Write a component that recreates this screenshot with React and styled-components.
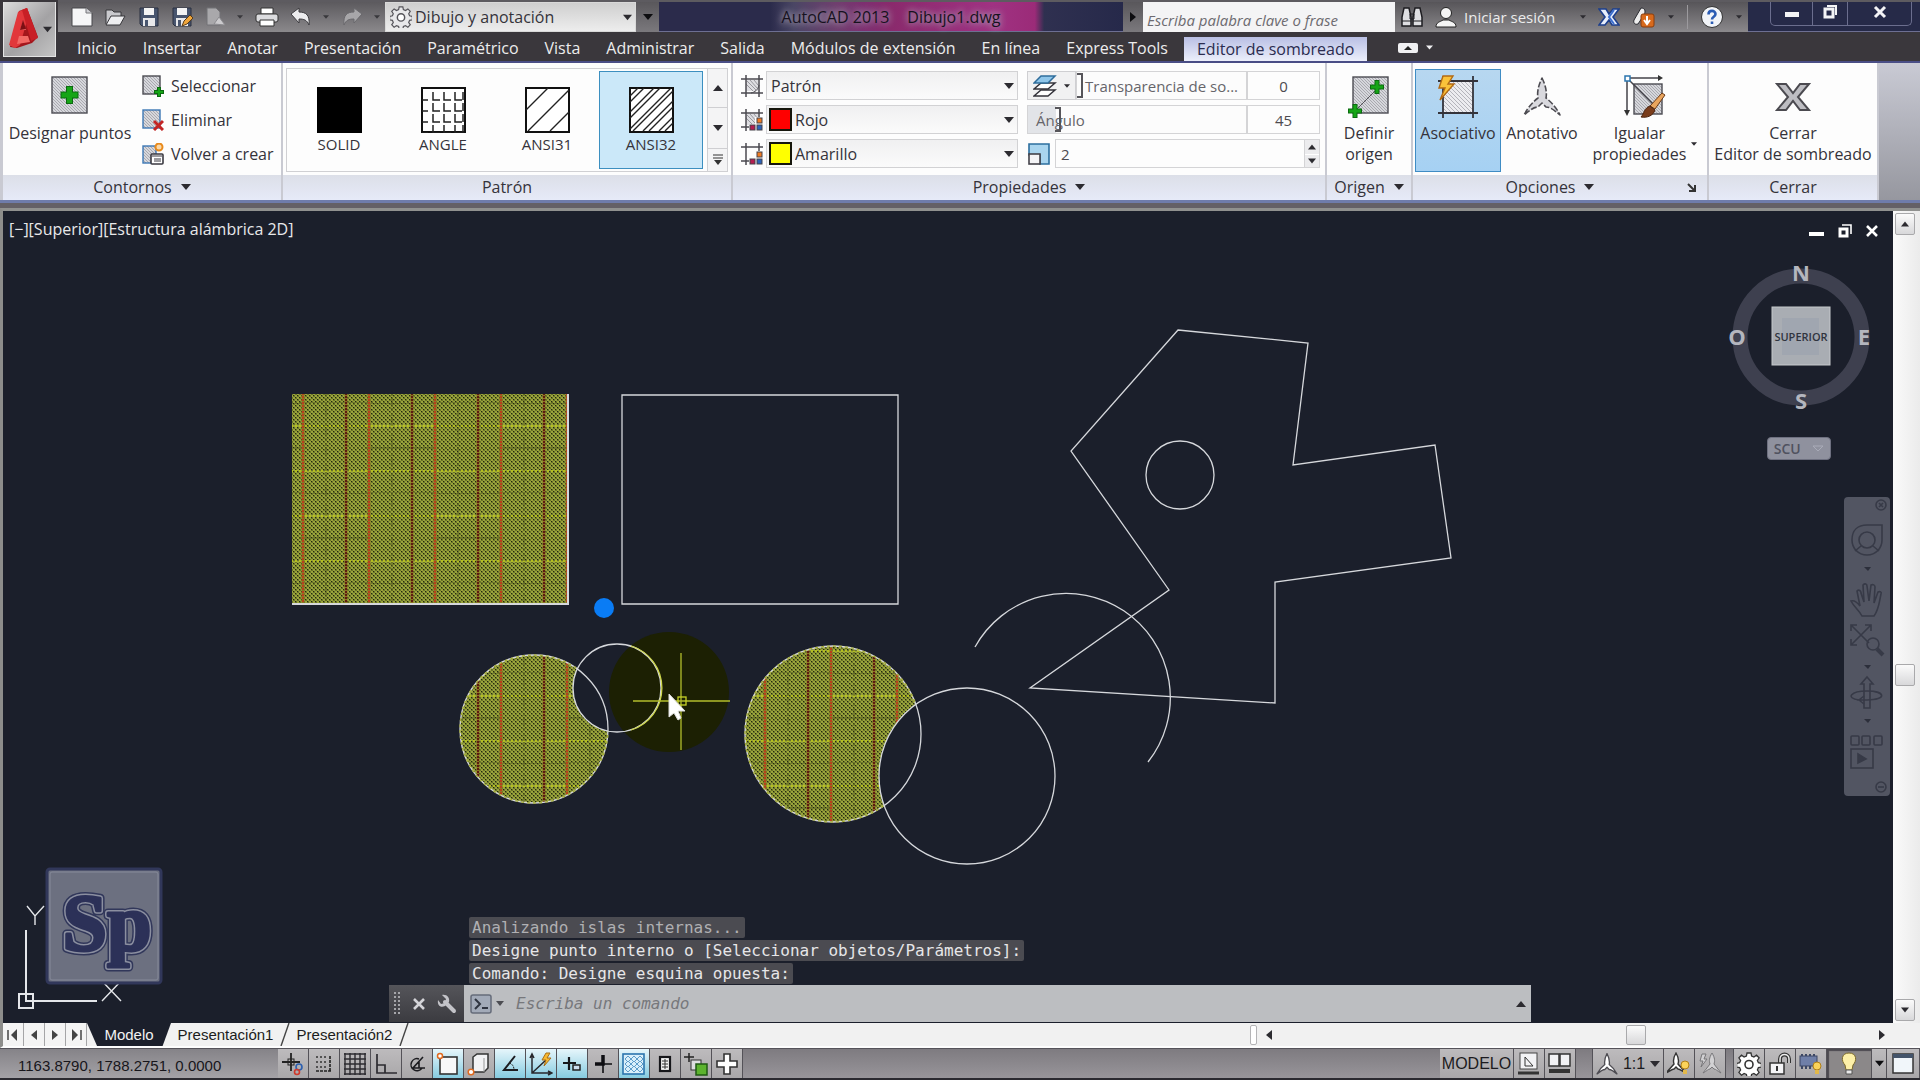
import React from 'react'
import styled, { createGlobalStyle, css } from 'styled-components'

const GlobalStyle = createGlobalStyle`
  * { box-sizing: border-box; }
  html, body { margin: 0; background: #1b1f2b; }
  body, button, input, select {
    font-family: "Open Sans", "Noto Sans", sans-serif;
    font-size: 16px;
  }
  button { border: none; background: none; padding: 0; margin: 0; color: inherit; cursor: pointer; }
  svg { display: block; flex: none; }
`

const ui = '#35333a'

/* ---------- shell ---------- */

const Shell = styled.div`
  min-height: 100vh;
  display: flex;
  flex-direction: column;
  background: #646066;
  color: ${ui};
  overflow: hidden;
`

const Header = styled.header`
  display: flex;
  background: #3a373c;
  border-bottom: 2px solid #4a4e86;
`

const AppButton = styled.button`
  width: 53px;
  height: 55px;
  margin: 2px 2px 0 3px;
  display: flex;
  align-items: center;
  justify-content: center;
  gap: 3px;
  background: linear-gradient(135deg, #dcdcdc, #a3a2a4 55%, #c4c4c4);
  border: 1px solid #e4e4e4;
  border-top: none;
`

const HeaderMain = styled.div`
  flex: 1;
  min-width: 0;
`

const TitleBar = styled.div`
  height: 34px;
  display: flex;
  align-items: stretch;
  border-top: 2px solid #5d5b60;
  border-bottom: 2px solid #3a373c;
  background: #2b2b4b;
`

const QuickBar = styled.div`
  width: 327px;
  display: flex;
  align-items: center;
  justify-content: space-between;
  padding: 0 5px 0 13px;
  background: linear-gradient(#5c5a5e, #8b898c);
`

const ToolButton = styled.button`
  display: flex;
  align-items: center;
  justify-content: center;
`

const SelectBox = styled.label`
  display: flex;
  align-items: center;
  gap: 3px;
  width: ${p => p.$w || 'auto'};
  flex: ${p => p.$w ? 'none' : '1'};
  height: ${p => p.$h || '29px'};
  padding: 0 3px 0 ${p => p.$left || '4px'};
  border: 1px solid ${p => p.$title ? '#d9d9d9' : '#d2d2d4'};
  background: ${p => p.$title ? 'linear-gradient(#cfcfcf, #ededed)' : 'linear-gradient(#f0f0f1, #fbfbfb)'};
  select {
    flex: 1;
    min-width: 0;
    appearance: none;
    border: none;
    outline: none;
    background: transparent;
    color: ${ui};
    padding: 0;
  }
`

const DarkButton = styled.button`
  width: ${p => p.$w};
  display: flex;
  align-items: center;
  justify-content: center;
  background: linear-gradient(#59575b, #7b797d);
`

const DocTitle = styled.h1`
  flex: 1;
  margin: 0;
  display: flex;
  align-items: center;
  justify-content: center;
  gap: 18px;
  font-size: 16px;
  font-weight: 400;
  color: #17121e;
  text-shadow: 0 0 8px #a7a0b4, 0 0 6px #a7a0b4;
  background: linear-gradient(90deg, #2b2b4b 24%, #4a4664 29%, #6f3f6e 38%, #7d2f70 44%, #8a2a6c 50%, #a03282 72%, #9b2b78 81%, #2f3050 83%, #26294a);
  border-bottom: 1px solid #6d6f92;
`

const SearchInput = styled.input`
  width: 252px;
  border: none;
  background: #f4f4f5;
  padding: 5px 4px 0;
  font-size: 15px;
  &::placeholder { color: #6d6b70; font-style: italic; opacity: 1; }
`

const InfoCenter = styled.div`
  width: 353px;
  display: flex;
  align-items: center;
  padding: 0 6px;
  color: #ececec;
  font-size: 15px;
  background: linear-gradient(#575559, #8b898c);
`

const SignIn = styled.button`
  display: flex;
  align-items: center;
  gap: 7px;
  margin-left: 12px;
  font-size: 15px;
`

const Push = styled.span`
  flex: 1;
`

const Divider = styled.span`
  width: 1px;
  height: 24px;
  background: #9c9a9e;
`

const WindowArea = styled.div`
  width: 172px;
  display: flex;
  justify-content: flex-end;
  padding-right: 8px;
  background: #262a48;
  border-bottom: 1px solid #6d6f92;
`

const WindowButtons = styled.div`
  width: 142px;
  height: 24px;
  display: grid;
  grid-template-columns: 41px 35px 1fr;
  border: 1px solid #6b6e8e;
  border-top: none;
  border-radius: 0 0 5px 5px;
  button { display: flex; align-items: center; justify-content: center; padding-bottom: 3px; }
  button + button { border-left: 1px solid #6b6e8e; }
`

const TabBar = styled.nav`
  height: 27px;
  display: flex;
  align-items: stretch;
  padding-left: 6px;
`

const Tab = styled.button`
  padding: 0 13px;
  color: ${p => p.$active ? '#2b2c50' : '#ededed'};
  background: ${p => p.$active ? 'linear-gradient(#b9bfe4, #eceffb)' : 'none'};
  margin: ${p => p.$active ? '3px 0 0 3px' : '1px 0 0'};
`

const CollapseButton = styled.button`
  display: flex;
  align-items: center;
  gap: 8px;
  margin-left: 31px;
`

/* ---------- ribbon ---------- */

const Ribbon = styled.section`
  height: 140px;
  display: flex;
  gap: 2px;
  padding-left: 3px;
  background: #c9cad2;
  border-bottom: 3px solid #6f7cab;
`

const PanelBox = styled.div`
  width: ${p => p.$w};
  flex: none;
  display: flex;
  flex-direction: column;
  background: #fdfdfd;
`

const PanelBody = styled.div`
  flex: 1;
  min-height: 0;
  display: flex;
  gap: ${p => p.$gap || '0'};
  padding: ${p => p.$pad || '0'};
`

const PanelTitle = styled.footer`
  height: 25px;
  display: flex;
  background: linear-gradient(#dcdfe8, #e6eaf8);
`

const TitleButton = styled.button`
  flex: 1;
  display: flex;
  align-items: center;
  justify-content: center;
  gap: 9px;
  padding-bottom: 2px;
`

const LauncherButton = styled.button`
  width: 20px;
  display: flex;
  align-items: center;
`

const RibbonFill = styled.div`
  flex: 1;
  background: linear-gradient(#c9cad4, #96979f);
`

const BigButton = styled.button`
  width: ${p => p.$w};
  height: 103px;
  display: flex;
  flex-direction: column;
  align-items: center;
  padding-top: 4px;
  gap: 3px;
  line-height: 21px;
  border: 1px solid ${p => p.$on ? '#3f8cc4' : 'transparent'};
  background: ${p => p.$on ? 'linear-gradient(#b7d7f0, #a6d1f3)' : 'none'};
  white-space: nowrap;
`

const WithArrow = styled.span`
  display: flex;
  align-items: center;
  gap: 5px;
`

const SmallStack = styled.div`
  display: flex;
  flex-direction: column;
  gap: 5px;
  padding-left: 5px;
`

const SmallButton = styled.button`
  height: 29px;
  display: flex;
  align-items: center;
  gap: 7px;
  white-space: nowrap;
`

const Gallery = styled.div`
  flex: 1;
  display: flex;
  border: 1px solid #d0d0d3;
`

const Swatch = styled.button`
  flex: 1;
  margin: 2px 0;
  display: flex;
  flex-direction: column;
  align-items: center;
  padding-top: 15px;
  gap: 1px;
  font-size: 15px;
  line-height: 21px;
  border: 1px solid ${p => p.$on ? '#3c8fc0' : 'transparent'};
  background: ${p => p.$on ? '#cbe8f9' : 'none'};
`

const GalleryScroll = styled.div`
  width: 20px;
  margin-left: 4px;
  display: grid;
  grid-template-rows: 38px 41px 1fr;
  border-left: 1px solid #d0d0d3;
  button { display: flex; align-items: center; justify-content: center; background: #f4f4f5; }
  button + button { border-top: 1px solid #cfcfd2; }
`

const PropColumn = styled.div`
  width: ${p => p.$w};
  display: flex;
  flex-direction: column;
  gap: 5px;
`

const PropRow = styled.div`
  height: 29px;
  display: flex;
  align-items: center;
  gap: ${p => p.$gap || '0'};
`

const ColorChip = styled.span`
  width: 23px;
  height: 23px;
  border: 2px solid #16160c;
  background: ${p => p.$c};
`

const LayerButton = styled.button`
  width: 49px;
  height: 29px;
  display: flex;
  align-items: center;
  justify-content: center;
  gap: 7px;
  background: #f1f1f2;
  border: 1px solid #cfcfd2;
`

const SliderBox = styled.label`
  flex: 1;
  height: 29px;
  display: grid;
  align-items: center;
  border: 1px solid #d4d4d6;
  color: #66656a;
  font-size: 15px;
  background: linear-gradient(90deg, #e2e4e8 ${p => p.$fill}, #fcfcfc ${p => p.$fill});
  > * { grid-area: 1 / 1; min-width: 0; }
  > span { padding-left: 8px; white-space: nowrap; }
  input {
    width: 100%;
    margin: 0;
    appearance: none;
    background: transparent;
  }
  input::-webkit-slider-thumb {
    appearance: none;
    width: 6px;
    height: 25px;
    border: 2px solid #56555a;
    border-left: none;
  }
`

const NumberBox = styled.input`
  width: ${p => p.$w};
  flex: ${p => p.$w ? 'none' : '1'};
  min-width: 0;
  height: 29px;
  padding: 0 5px;
  border: 1px solid #d4d4d6;
  border-right: ${p => p.$w ? '1px solid #d4d4d6' : 'none'};
  background: #fdfdfd;
  text-align: ${p => p.$w ? 'center' : 'left'};
  color: #4d4b50;
  font-size: 15px;
`

const ScaleRow = styled.div`
  flex: 1;
  display: flex;
`

const Spinner = styled.div`
  width: 16px;
  height: 29px;
  display: grid;
  grid-template-rows: 1fr 1fr;
  border: 1px solid #d4d4d6;
  button { display: flex; align-items: center; justify-content: center; background: #ececee; }
  button + button { border-top: 1px solid #fff; }
`

/* ---------- drawing area ---------- */

const Workspace = styled.main`
  flex: 1;
  min-height: 600px;
  display: flex;
  margin-top: 5px;
  border-top: 3px solid #90918f;
  border-left: 3px solid #8d8d8b;
`

const Viewport = styled.div`
  position: relative;
  flex: 1;
  min-width: 0;
  background: #1b1f2b;
  > svg.sheet { position: absolute; inset: 0; width: 100%; height: 100%; }
`

const ViewLabel = styled.button`
  position: absolute;
  left: 6px;
  top: 7px;
  color: #e8e8ea;
`

const DocControls = styled.div`
  position: absolute;
  top: 13px;
  right: 14px;
  display: flex;
  align-items: center;
  gap: 13px;
`

const ViewCube = styled.div`
  position: absolute;
  top: 44px;
  right: 16px;
  width: 152px;
  display: flex;
  flex-direction: column;
  align-items: center;
  gap: 22px;
`

const CoordButton = styled.button`
  width: 64px;
  height: 23px;
  display: flex;
  align-items: center;
  justify-content: space-around;
  margin-left: -4px;
  border-radius: 4px;
  border: 1px solid #6e7080;
  background: #8f919e;
  color: #50525f;
  font-size: 14px;
  font-weight: 600;
`

const NavBar = styled.div`
  position: absolute;
  right: 3px;
  top: 286px;
  width: 46px;
  height: 299px;
  border-radius: 4px;
  background: #525562;
`

const Watermark = styled.div`
  position: absolute;
  left: 42px;
  bottom: 38px;
  width: 118px;
  height: 118px;
`

const CommandLine = styled.div`
  position: absolute;
  left: 386px;
  right: 362px;
  bottom: 1px;
  font-family: "DejaVu Sans Mono", monospace;
`

const History = styled.ol`
  list-style: none;
  margin: 0 0 1px 80px;
  padding: 0;
  display: flex;
  flex-direction: column;
  align-items: flex-start;
  gap: 2px;
`

const HistoryLine = styled.li`
  height: 21px;
  padding: 0 3px;
  line-height: 21px;
  border-radius: 2px;
  background: #4b4b51;
  color: ${p => p.$old ? '#b0b0b3' : '#e6e6e8'};
  white-space: pre;
`

const Prompt = styled.div`
  height: 37px;
  display: flex;
  background: #bcbec1;
  align-items: center;
  padding-right: 5px;
  > input {
    flex: 1;
    border: none;
    outline: none;
    background: transparent;
    font-family: inherit;
    padding: 0 0 0 10px;
  }
  > input::placeholder { color: #77787c; font-style: italic; opacity: 1; }
`

const PromptHandle = styled.div`
  width: 75px;
  height: 37px;
  margin-right: 6px;
  display: flex;
  align-items: center;
  justify-content: space-between;
  padding: 0 7px 0 4px;
  background: linear-gradient(#55555a, #3b3b40);
`

const VScroll = styled.div`
  width: 27px;
  padding: 2px 5px 2px 2px;
  display: flex;
  flex-direction: column;
  align-items: center;
  background: linear-gradient(90deg, #fafafa, #ebebeb);
`

const ScrollButton = styled.button`
  width: 20px;
  height: ${p => p.$h || '22px'};
  display: flex;
  align-items: center;
  justify-content: center;
  border: 1px solid #a9a9ab;
  border-radius: 2px;
  background: linear-gradient(#fbfbfb, #d8d8da);
`

const ScrollGap = styled.span`
  flex: ${p => p.$n};
`

const LayoutBar = styled.div`
  height: 25px;
  display: flex;
  align-items: stretch;
  background: #f1f1f1;
  border-left: 3px solid #8d8d8b;
  border-bottom: 2px solid #fdfdfd;
`

const NavButton = styled.button`
  width: 21px;
  display: flex;
  align-items: center;
  justify-content: center;
  background: #f4f4f4;
  border-right: 1px solid #a5a5a7;
`

const LayoutTab = styled.button`
  width: ${p => p.$w};
  font-family: "Liberation Sans", Arial, sans-serif;
  font-size: 15px;
  color: ${p => p.$on ? '#f2f2f2' : '#1c1c20'};
  ${p => p.$on && css`
    background: #1b1f2b;
    clip-path: polygon(0 0, 100% 0, 90% 100%, 12% 100%);
  `}
`

const HScroll = styled.div`
  width: 670px;
  margin-left: auto;
  display: flex;
  align-items: center;
  padding: 0 33px 0 0;
`

const SplitGrip = styled.span`
  width: 7px;
  height: 20px;
  margin-right: 7px;
  border: 1px solid #b4b4b6;
  border-radius: 2px;
  background: #fff;
`

/* ---------- status bar ---------- */

const StatusBar = styled.footer`
  height: 32px;
  display: flex;
  border-top: 1px solid #55535a;
  border-bottom: 2px solid #2b2a30;
  background: linear-gradient(#7e7b80, #98959a);
  font-family: "Liberation Sans", Arial, sans-serif;
`

const Coords = styled.output`
  width: 278px;
  display: flex;
  align-items: center;
  padding: 3px 0 0 18px;
  font-size: 15px;
  color: #17161b;
  background: linear-gradient(#858388, #a4a2a6);
`

const StatusButton = styled.button`
  width: ${p => p.$w || '31px'};
  display: flex;
  align-items: center;
  justify-content: center;
  gap: 5px;
  border-right: 1px solid #545258;
  font-family: inherit;
  font-size: 16px;
  color: #1c1b20;
  background: ${p => p.$dark ? '#8b8889' : p.$on ? 'linear-gradient(#e6f6fb, #86cbe0)' : 'linear-gradient(#bdbbbd, #a9a7a9)'};
  box-shadow: ${p => p.$dark ? 'inset 2px 2px 1px #4c4a50' : 'none'};
`

const StatusGap = styled.span`
  width: ${p => p.$w};
  border-right: 1px solid #545258;
`

/* ---------- glyphs ---------- */

const Arrow = ({ dir = 'down', size = 10, color = '#2c2b30' }) => {
  const d = {
    down: 'M0 2h10L5 8z',
    up: 'M0 8h10L5 2z',
    left: 'M8 0v10L2 5z',
    right: 'M2 0v10l6-5z',
  }[dir]
  return <svg width={size} height={size} viewBox="0 0 10 10" aria-hidden="true"><path d={d} fill={color} /></svg>
}

const S = ({ w = 24, h = 24, box, children }) => (
  <svg width={w} height={h} viewBox={box || `0 0 ${w} ${h}`} fill="none" aria-hidden="true">{children}</svg>
)

const hatchLines = (w, h, step) => {
  let d = ''
  for (let i = -h; i < w; i += step) {
    const x1 = Math.max(i, 0), y1 = x1 - i
    const x2 = Math.min(i + h, w), y2 = x2 - i
    d += `M${x1} ${y1}L${x2} ${y2}`
  }
  return d
}

const Hatch = ({ x = 0, y = 0, w, h, step = 3, stroke = '#a9a9af', fill = '#d6d7dc', edge = '#4b4b52' }) => (
  <g transform={`translate(${x} ${y})`}>
    <rect width={w} height={h} fill={fill} />
    <path d={hatchLines(w, h, step)} stroke={stroke} strokeWidth="1" />
    <rect width={w} height={h} stroke={edge} strokeWidth="1.4" />
  </g>
)

const Plus = ({ x, y, s = 5, t = 4, c = '#16a516' }) => (
  <g>
    <path d={`M${x - s} ${y}h${2 * s}M${x} ${y - s}v${2 * s}`} stroke="#0b6a10" strokeWidth={t + 2} />
    <path d={`M${x - s + 1} ${y}h${2 * s - 2}M${x} ${y - s + 1}v${2 * s - 2}`} stroke={c} strokeWidth={t} />
  </g>
)

const Gear = ({ size = 22, stroke = '#55545a', fill = '#e8e8ea' }) => (
  <S w={size} h={size} box="0 0 24 24">
    <path d="M10 1h4l.6 3 2.3 1 2.6-1.8 2.6 2.7-1.7 2.6 1 2.2 3 .7v3.6l-3 .6-1 2.4 1.7 2.5-2.6 2.7-2.6-1.8-2.3 1-.6 3h-4l-.6-3-2.3-1-2.6 1.8-2.6-2.7 1.7-2.5-1-2.4-3-.6v-3.6l3-.7 1-2.2L1.900 5.900 4.500 3.200 7.100 5l2.300-1z" fill={fill} stroke={stroke} strokeWidth="1.3" />
    <circle cx="12" cy="12.500" r="4" stroke={stroke} strokeWidth="1.600" fill="#fff" />
  </S>
)

const Tripod = ({ size = 40, stroke = '#4d4c52', fill = '#dcdce0', dash }) => (
  <S w={size} h={size} box="0 0 40 40">
    <path d="M20 1c4 8 5 15 4 20 4 3 10 9 14 17-6-5-10-8-14-8l-4-4-4 4c-4 0-8 3-14 8 4-8 10-14 14-17-1-5 0-12 4-20z" fill={fill} stroke={stroke} strokeWidth={size > 30 ? 1.6 : 2.4} strokeDasharray={dash} strokeLinejoin="round" />
  </S>
)

const Disk = ({ pen }) => (
  <S w={22} h={22}>
    <path d="M2 2h18v18H4l-2-2z" fill="#48556e" stroke="#2a3140" />
    <rect x="6" y="2" width="10" height="7" fill="#f4f4f4" />
    <rect x="5" y="12" width="12" height="8" fill="#e8e8ea" />
    <rect x="7" y="14" width="3" height="6" fill="#48556e" />
    {pen && <path d="M11 20l2-5 6-6 3 3-6 6z" fill="#f0a63c" stroke="#5a3c17" />}
  </S>
)

const HatchFrame = ({ curved, chips, inner = true }) => (
  <S w={22} h={22}>
    {inner && <path d="M5 5h12v11H5z" fill="#dedee2" />}
    {inner && <path d="M6 6l9 9M9 5l7 8M5 9l7 7M13 5l4 5" stroke="#98989e" />}
    <path d="M5 0v22M0 4h22M18 0v22M0 18h22" stroke="#4b4a50" strokeWidth="1.500" />
    {curved && <path d="M18 10c-1 5-4 7-8 8" stroke="#4b4a50" />}
    {chips && (
      <g strokeWidth="1" stroke="#44424a">
        <path d="M14 8h8v14H8v-7h6z" fill="#fdfdfd" stroke="none" />
        <rect x="16" y="9" width="5" height="5" fill="#f07a20" />
        <rect x="9" y="16" width="5" height="5" fill="#b51e50" />
        <rect x="16" y="16" width="5" height="5" fill="#2c63b8" />
      </g>
    )}
  </S>
)

const LogoA = () => (
  <S w={32} h={46}>
    <path d="M2 41L11 5l8-3 11 29-6 6-15 5z" fill="#a3161c" />
    <path d="M1 39L10 6l9-4 2 6-9 31-5 3z" fill="#e2373b" />
    <path d="M14 4l5-2 11 30-7 3z" fill="#c81f26" />
    <path d="M12 24l3-9 3 9zM11 30h9l2 6-13 2z" fill="#f26a66" />
    <path d="M15 14l3 9-6 1z" fill="#7c0f14" />
  </S>
)

const PATTERNS = {
  SOLID: <S w={45} h={46}><rect width="45" height="46" fill="#000" /></S>,
  ANGLE: (
    <S w={45} h={46}>
      <rect x="1" y="1" width="43" height="44" fill="#fff" stroke="#111" strokeWidth="2" />
      <path
        d={[0, 1, 2, 3].map(r => `M1 ${13 + r * 11}h6` + [0, 1, 2].map(c => `M${12 + c * 11} ${5 + r * 11}v8h7`).join('') + `M42 ${5 + r * 11}v8`).join('')}
        stroke="#222" strokeWidth="1.500"
      />
    </S>
  ),
  ANSI31: (
    <S w={45} h={46}>
      <rect x="1" y="1" width="43" height="44" fill="#fff" stroke="#111" strokeWidth="2" />
      <path d="M1 23L23 1M3 44L44 3M25 44l19-19" stroke="#222" strokeWidth="1.400" />
    </S>
  ),
  ANSI32: (
    <S w={45} h={46}>
      <rect x="1" y="1" width="43" height="44" fill="#fff" stroke="#111" strokeWidth="2" />
      <path d="M1 9l8-8M1 15L15 1M1 25L25 1M1 31L31 1M1 42L42 1M4 44L44 4M14 44l30-30M20 44l24-24M30 44l14-14M36 44l8-8" stroke="#222" strokeWidth="1.400" />
    </S>
  ),
}

const statusTools = [
  ['Inferir restricciones', false, <S><path d="M10 1v18M1 10h18" stroke="#222" strokeWidth="1.800" /><rect x="7" y="7" width="6" height="6" stroke="#222" /><circle cx="18" cy="15" r="3" stroke="#2c5fb0" strokeWidth="1.600" /><circle cx="16" cy="20" r="2.500" stroke="#d0392b" strokeWidth="1.600" /></S>],
  ['Forzar cursor', false, <S><path d="M4 5h11M4 10h11M4 15h11" stroke="#333" strokeWidth="1.600" strokeDasharray="2 2" /><path d="M18 4v15M4 19h15" stroke="#222" strokeWidth="1.600" strokeDasharray="3 1" /></S>],
  ['Rejilla', false, <S><path d="M1 2h22M1 7h22M1 12h22M1 17h22M1 22h22M2 1v22M7 1v22M12 1v22M17 1v22M22 1v22" stroke="#2c2b30" strokeWidth="1.400" /></S>],
  ['Orto', false, <S><path d="M3 2v19h20M3 13h8v8" stroke="#2c2b30" strokeWidth="1.700" /></S>],
  ['Polar', false, <S><path d="M18 5L8 16h12M14 7a6 6 0 1 0 3 9M14 10v6" stroke="#1c1c20" strokeWidth="1.600" /></S>],
  ['Referencia a objetos', true, <S><rect x="4" y="5" width="17" height="17" fill="#f7f7f8" stroke="#333" strokeWidth="1.600" /><circle cx="4" cy="4" r="2.500" stroke="#e06a20" strokeWidth="1.500" fill="#fff" /></S>],
  ['Referencia a objetos 3D', false, <S><path d="M6 5l4-3h11v14l-4 4H6z" fill="#f2f2f4" stroke="#333" strokeWidth="1.500" /><path d="M17 6v14" stroke="#999" /><circle cx="4" cy="20" r="2.800" stroke="#e06a20" strokeWidth="1.500" fill="#fff" /></S>],
  ['Rastreo', true, <S><path d="M17 4L6 18h14" stroke="#1c1c20" strokeWidth="2" /><path d="M11 11c4 1 5 4 5 7" stroke="#222" strokeDasharray="2 1" /></S>],
  ['SCP dinámico', true, <S><path d="M3 3v18h19M3 21l14-13M1 6l2-4 2 4M19 19l4 2-4 2" stroke="#27272c" strokeWidth="1.500" /><path d="M17 1l-4 7h4l-2 6 7-8h-4l3-5z" fill="#f8b930" stroke="#a8701a" /></S>],
  ['Entrada dinámica', true, <S><path d="M9 5v13M3 11h13" stroke="#16161a" strokeWidth="2.200" /><rect x="13" y="13" width="7" height="5" fill="#cde" stroke="#222" strokeWidth="1.500" /></S>],
  ['Grosor de línea', false, <S><path d="M12 3v9H4" stroke="#0e0e12" strokeWidth="3.500" /><path d="M12 12v9M12 12h9" stroke="#0e0e12" strokeWidth="1.600" /></S>],
  ['Transparencia', true, <S><rect x="1" y="2" width="21" height="20" fill="#d9effa" stroke="#2b75ae" strokeWidth="1.600" /><path d="M3 7l3-3 3 3 3-3 3 3 3-3 3 3M3 12l3-3 3 3 3-3 3 3 3-3 3 3M3 17l3-3 3 3 3-3 3 3 3-3 3 3M3 7l3 3 3-3 3 3 3-3 3 3 3-3M3 12l3 3 3-3 3 3 3-3 3 3 3-3M3 17l3 3 3-3 3 3 3-3 3 3 3-3" stroke="#5c9cc9" /></S>],
  ['Propiedades rápidas', false, <S><rect x="7" y="5" width="10" height="14" fill="#f4f4f4" stroke="#16161a" strokeWidth="2.200" /><path d="M9 9h6M9 12h6M9 15h6M12 7v10" stroke="#333" /></S>],
  ['Ciclo de selección', false, <S><path d="M5 1v9M0 5h10" stroke="#222" strokeWidth="1.500" /><rect x="7" y="8" width="10" height="10" fill="#dedee0" stroke="#333" /><rect x="12" y="12" width="11" height="11" fill="#5cb32e" stroke="#1f5a13" strokeWidth="1.500" /></S>],
  ['Supervisor de anotación', false, <S><path d="M9 2h6v7h7v6h-7v7H9v-7H2V9h7z" fill="#fff" stroke="#333" strokeWidth="1.600" /></S>],
]

/* Geometry in drawing units, origin at the top left of the viewport */
const redStripes = [0, 43]

function Sheet() {
  return (
    <svg className="sheet" viewBox="3 211 1890 812" preserveAspectRatio="xMidYMid meet" fill="none" stroke="#d6d8dc" strokeWidth="1.300" role="img" aria-label="Dibujo1">
      <defs>
        <pattern id="weave" x="291" y="393" width="4" height="4" patternUnits="userSpaceOnUse">
          <rect width="4" height="4" fill="#9aa53a" stroke="none" />
          <path d="M0 0h2v2h-2zM2 2h2v2h-2z" fill="#69722a" stroke="none" />
          <path d="M0 0h1v1h-1zM2 2h1v1h-1z" fill="#23290f" stroke="none" />
        </pattern>
        <pattern id="stripes" x="301" y="393" width="66" height="45" patternUnits="userSpaceOnUse">
          <path d="M0 33h66" stroke="#b4bf1e" strokeWidth="2" strokeDasharray="2 2" />
          <path d="M0 10h66" stroke="#4c541c" strokeWidth="1" strokeDasharray="2 2" />
          <path d="M25 0v45" stroke="#525a1c" strokeWidth="1" strokeDasharray="3 2" />
          {redStripes.map(x => (
            <g key={x}>
              <path d={`M${x + 2} 0v45`} stroke="#8c7424" strokeWidth="3" />
              <path d={`M${x + 2} 0v45`} stroke={x ? '#5e1a10' : '#b8401c'} strokeWidth="2" strokeDasharray="2 1" />
            </g>
          ))}
        </pattern>
        <mask id="biteA"><rect x="400" y="600" width="300" height="300" fill="#fff" stroke="none" /><circle cx="617" cy="688" r="44" fill="#000" stroke="none" /></mask>
        <mask id="biteC"><rect x="700" y="600" width="400" height="300" fill="#fff" stroke="none" /><circle cx="967" cy="776" r="88" fill="#000" stroke="none" /></mask>
      </defs>

      <g stroke="none">
        {['weave', 'stripes'].map(id => (
          <g key={id} fill={`url(#${id})`}>
            <rect x="292" y="394" width="276" height="210" />
            <circle cx="534" cy="729" r="74" mask="url(#biteA)" />
            <circle cx="833" cy="734" r="88" mask="url(#biteC)" />
          </g>
        ))}
        <circle cx="669" cy="692" r="60" fill="#1c2003" />
        <circle cx="604" cy="608" r="10" fill="#0a7cf5" />
      </g>

      <path d="M292 604h276V394" strokeWidth="2" />
      <path d="M622 395h276v209h-276z" />
      <circle cx="534" cy="729" r="74" />
      <circle cx="534" cy="729" r="74" stroke="#a4ad33" strokeDasharray="3 3" mask="url(#biteA)" />
      <circle cx="833" cy="734" r="88" />
      <circle cx="833" cy="734" r="88" stroke="#a4ad33" strokeDasharray="3 3" mask="url(#biteC)" />
      <circle cx="617" cy="688" r="44" />
      <path d="M631 646a44 44 0 0 1 0 84" stroke="#cdd64a" />
      <circle cx="967" cy="776" r="88" />
      <path d="M1178 330l130 13-15 122 142-20 16 113-176 24v121l-245-15 139-98-98-139z" />
      <circle cx="1180" cy="475" r="34" />
      <path d="M975 647a104.200 104.200 0 1 1 173 115" />

      <path d="M633 701h97M681 653v97" stroke="#b3bd2c" />
      <rect x="678" y="697" width="8" height="8" stroke="#c8d327" />
      <path d="M669 694v23l5-4 4 7 3-2-3-7h7z" fill="#fff" stroke="#ddd" strokeWidth="1" />

      <g stroke="#e4e6ea" strokeWidth="2">
        <rect x="19" y="994" width="14" height="14" />
        <path d="M26 930v71h71" />
        <path d="M27 906l8 10 9-10M35 916v9M102 981l19 20M121 981l-19 20" strokeWidth="1.400" />
      </g>
    </svg>
  )
}

function Panel({ w, title, menu, launcher, pad, gap, children }) {
  return (
    <PanelBox $w={w}>
      <PanelBody $pad={pad} $gap={gap}>{children}</PanelBody>
      <PanelTitle>
        <TitleButton>{title}{menu && <Arrow size={10} />}</TitleButton>
        {launcher && <LauncherButton aria-label="Parámetros de sombreado"><S w={10} h={10}><path d="M1 1l6 6M8 2v6H2" stroke="#333" strokeWidth="2" /></S></LauncherButton>}
      </PanelTitle>
    </PanelBox>
  )
}

function Picker({ label, value, color, left }) {
  return (
    <SelectBox $left={left}>
      {color && <ColorChip $c={color} />}
      <select aria-label={label} defaultValue={value}><option>{value}</option></select>
      <Arrow />
    </SelectBox>
  )
}

const tabs = ['Inicio', 'Insertar', 'Anotar', 'Presentación', 'Paramétrico', 'Vista', 'Administrar', 'Salida', 'Módulos de extensión', 'En línea', 'Express Tools', 'Editor de sombreado']

function Top() {
  return (
    <Header>
      <AppButton aria-label="Menú de la aplicación"><LogoA /><Arrow size={9} /></AppButton>
      <HeaderMain>
        <TitleBar>
          <QuickBar>
            <ToolButton aria-label="Nuevo"><S w={22} h={22}><path d="M1 2h14l6 5v13H1z" fill="#f6f6f7" stroke="#47464a" /><path d="M15 2v5h6" fill="#cfcfd4" stroke="#77767a" /></S></ToolButton>
            <ToolButton aria-label="Abrir"><S w={22} h={22}><path d="M2 18V4h6l2 2h7v4" fill="#c9c9cd" stroke="#37363a" /><path d="M2 19l5-9h14l-5 9z" fill="#eeeef0" stroke="#37363a" /></S></ToolButton>
            <ToolButton aria-label="Guardar"><Disk /></ToolButton>
            <ToolButton aria-label="Guardar como"><Disk pen /></ToolButton>
            <ToolButton aria-label="Trazar"><S w={22} h={22}><path d="M3 2h9l4 4v13H3z" fill="#a9a8ab" stroke="#737276" /><path d="M10 18l5-7 6 8z" fill="#cccbce" stroke="#8c8b8f" /></S></ToolButton>
            <Arrow size={6} color="#39383c" />
            <ToolButton aria-label="Imprimir"><S w={24} h={22}><path d="M6 2h12v6H6z" fill="#fff" stroke="#333" /><rect x="1" y="8" width="22" height="8" rx="2" fill="#dcdcdf" stroke="#333" /><path d="M5 14h14v6H5z" fill="#fff" stroke="#333" /></S></ToolButton>
            <ToolButton aria-label="Deshacer"><S w={22} h={22}><path d="M1 8l8-6v4c7 0 11 3 10 13-2-5-5-6-10-6v4z" fill="#ececee" stroke="#3c3b3f" /></S></ToolButton>
            <Arrow size={6} color="#39383c" />
            <ToolButton aria-label="Rehacer"><S w={22} h={22}><path d="M21 8l-8-6v4C6 6 2 9 3 19c2-5 5-6 10-6v4z" fill="#a7a6a9" stroke="#69686c" /></S></ToolButton>
            <Arrow size={6} color="#39383c" />
          </QuickBar>
          <SelectBox $title $w="251px" $h="30px">
            <Gear size={22} />
            <select aria-label="Espacio de trabajo" defaultValue="Dibujo y anotación"><option>Dibujo y anotación</option></select>
            <Arrow size={9} />
          </SelectBox>
          <DarkButton $w="23px" aria-label="Personalizar barra"><Arrow color="#0d0d10" /></DarkButton>
          <DocTitle><span>AutoCAD 2013</span><span>Dibujo1.dwg</span></DocTitle>
          <DarkButton $w="20px" aria-label="Ocultar búsqueda"><Arrow dir="right" color="#0d0d10" /></DarkButton>
          <SearchInput aria-label="Buscar" placeholder="Escriba palabra clave o frase" />
          <InfoCenter>
            <ToolButton aria-label="Buscar"><S w={22} h={22}><path d="M3 2h5l2 9v9H1v-9zM14 2h5l2 9v9h-9v-9z" fill="#dedee1" stroke="#1d1c20" strokeWidth="1.500" /><path d="M9 8h4v5H9zM1 15h9M12 15h9" stroke="#1d1c20" /></S></ToolButton>
            <SignIn>
              <S w={22} h={22}><circle cx="11" cy="7" r="5.500" fill="#f4f4f4" stroke="#222" /><path d="M1 21c0-5 4-5 7-7h6c3 2 7 2 7 7z" fill="#f4f4f4" stroke="#222" /></S>
              Iniciar sesión
            </SignIn>
            <Push />
            <Push />
            <Arrow size={6} />
            <Push />
            <ToolButton aria-label="Exchange"><S w={22} h={20}><path d="M1 2h7l3 5 4-5h6l-6 8 6 8h-7l-3-5-4 5H1l6-8z" fill="#e8eefb" stroke="#1d3f8c" strokeWidth="1.600" /><path d="M16 3l-5 7 5 7" stroke="#3c6fd0" strokeWidth="2" /></S></ToolButton>
            <Push />
            <ToolButton aria-label="Autodesk 360"><S w={24} h={22}><path d="M9 2c4 0 5 3 3 7l-6 9c-3 1-5-1-4-4z" fill="#eee" stroke="#2a2a30" /><rect x="9" y="8" width="13" height="13" rx="2" fill="#d86a1c" stroke="#8a3d0c" /><path d="M15 10v7M12 14l3 4 3-4" stroke="#fff" strokeWidth="2" /></S></ToolButton>
            <Push />
            <Arrow size={6} />
            <Push />
            <Divider />
            <Push />
            <ToolButton aria-label="Ayuda"><S w={24} h={24}><circle cx="12" cy="12" r="10.500" fill="#f2f4f8" stroke="#333" /><path d="M8.500 9.500c0-5 7-4.500 7-.5 0 3-3.500 2.500-3.500 5.500M12 16.500v2.500" stroke="#2b5cb4" strokeWidth="2.600" /></S></ToolButton>
            <Push />
            <Arrow size={6} />
          </InfoCenter>
          <WindowArea>
            <WindowButtons>
              <button aria-label="Minimizar"><S w={16} h={14}><rect x="1" y="7" width="14" height="5" fill="#f4f4f6" /></S></button>
              <button aria-label="Restaurar"><S w={16} h={16}><path d="M5 2h9v9" stroke="#f4f4f6" strokeWidth="2" /><rect x="3" y="5" width="8" height="8" stroke="#f4f4f6" strokeWidth="3" /></S></button>
              <button aria-label="Cerrar"><S w={14} h={14}><path d="M2 2l10 10M12 2L2 12" stroke="#f4f4f6" strokeWidth="3" /></S></button>
            </WindowButtons>
          </WindowArea>
        </TitleBar>
        <TabBar>
          {tabs.map(t => <Tab key={t} $active={t === 'Editor de sombreado'}>{t}</Tab>)}
          <CollapseButton aria-label="Minimizar cinta">
            <S w={20} h={12}><rect x="0" y="1" width="20" height="10" rx="2" fill="#f0f0f2" /><path d="M6 8h8l-4-4z" fill="#222" /></S>
            <Arrow size={7} color="#f0f0f2" />
          </CollapseButton>
        </TabBar>
      </HeaderMain>
    </Header>
  )
}

function HatchRibbon() {
  return (
    <Ribbon>
      <Panel w="278px" title="Contornos" menu pad="8px 0 0">
        <BigButton $w="134px">
          <S w={40} h={44}><Hatch x={2} y={1} w={35} h={36} /><Plus x={19.500} y={19} s={9} t={5} /></S>
          <span>Designar puntos</span>
        </BigButton>
        <SmallStack>
          <SmallButton><S w={22} h={22}><Hatch x={1} y={1} w={17} h={18} /><Plus x={17} y={17} s={5} t={2} /></S>Seleccionar</SmallButton>
          <SmallButton><S w={22} h={22}><Hatch x={1} y={1} w={17} h={18} edge="#3c77b4" /><path d="M12 12l9 9M21 12l-9 9" stroke="#c22525" strokeWidth="3" /></S>Eliminar</SmallButton>
          <SmallButton><S w={22} h={22}><Hatch x={1} y={3} w={13} h={17} edge="#3c77b4" /><circle cx="17" cy="4" r="3.500" fill="#fbd9a8" stroke="#e88a1c" strokeWidth="2" /><rect x="9" y="11" width="12" height="10" rx="1" fill="#fff" stroke="#3a3940" strokeWidth="1.600" /><path d="M10 13h10M12 16h7M12 18h7" stroke="#3a3940" /></S>Volver a crear</SmallButton>
        </SmallStack>
      </Panel>

      <Panel w="448px" title="Patrón" pad="5px 3px 3px">
        <Gallery>
          {Object.keys(PATTERNS).map(p => (
            <Swatch key={p} $on={p === 'ANSI32'}>{PATTERNS[p]}{p}</Swatch>
          ))}
          <GalleryScroll>
            <button aria-label="Subir"><Arrow dir="up" /></button>
            <button aria-label="Bajar"><Arrow /></button>
            <button aria-label="Más patrones"><S w={10} h={12}><path d="M0 1h10M0 4h10" stroke="#333" /><path d="M1 6h8l-4 5z" fill="#333" /></S></button>
          </GalleryScroll>
        </Gallery>
      </Panel>

      <Panel w="592px" title="Propiedades" menu pad="8px 5px 0 8px" gap="9px">
        <PropColumn $w="277px">
          <PropRow $gap="3px"><HatchFrame curved /><Picker label="Tipo de sombreado" value="Patrón" /></PropRow>
          <PropRow $gap="3px"><HatchFrame chips /><Picker label="Color de sombreado" value="Rojo" color="#ff0000" left="2px" /></PropRow>
          <PropRow $gap="3px"><HatchFrame chips inner={false} /><Picker label="Color de fondo" value="Amarillo" color="#ffff00" left="2px" /></PropRow>
        </PropColumn>
        <PropColumn $w="293px">
          <PropRow>
            <LayerButton aria-label="Capa">
              <S w={24} h={24}><g stroke="#33323a" strokeWidth="1.500" fill="#fff"><path d="M1 22l7-6h14l-7 6z" /><path d="M1 15l7-6h14l-7 6z" /><path d="M1 9l7-7h14l-7 7z" fill="#8fc6ea" stroke="#2f6d9c" /></g></S>
              <Arrow size={6} />
            </LayerButton>
            <SliderBox $fill="0%"><span>Transparencia de so...</span><input type="range" min="0" max="90" defaultValue="0" /></SliderBox>
            <NumberBox $w="73px" aria-label="Valor de transparencia" defaultValue="0" />
          </PropRow>
          <PropRow>
            <SliderBox $fill="13%"><span>Ángulo</span><input type="range" min="0" max="360" defaultValue="45" /></SliderBox>
            <NumberBox $w="73px" aria-label="Valor de ángulo" defaultValue="45" />
          </PropRow>
          <PropRow $gap="4px">
            <S w={24} h={24}><path d="M2 2h20v20h-9v-9H2z" fill="#a9d5ef" stroke="#2c6f9f" strokeWidth="1.600" /><rect x="2" y="12" width="11" height="10" fill="#f4f4f6" stroke="#44434a" strokeWidth="1.600" /></S>
            <ScaleRow>
              <NumberBox aria-label="Escala de sombreado" defaultValue="2" />
              <Spinner>
                <button aria-label="Aumentar"><Arrow dir="up" size={8} /></button>
                <button aria-label="Disminuir"><Arrow size={8} /></button>
              </Spinner>
            </ScaleRow>
          </PropRow>
        </PropColumn>
      </Panel>

      <Panel w="84px" title="Origen" menu pad="6px 0 0">
        <BigButton $w="84px">
          <S w={46} h={46}><Hatch x={7} y={3} w={35} h={36} /><path d="M10 36L32 14" stroke="#55545a" /><Plus x={31} y={13} s={7} t={3} /><Plus x={9} y={37} s={7} t={3} /></S>
          <span>Definir<br />origen</span>
        </BigButton>
      </Panel>

      <Panel w="294px" title="Opciones" menu launcher pad="6px 0 0 2px">
        <BigButton $w="86px" $on>
          <S w={46} h={46}>
            <path d="M8 7h30v32H8z" fill="#ececf0" />
            <path d={hatchLines(30, 30, 4)} transform="translate(8 8)" stroke="#b4b4bb" />
            <path d="M8 2v42M38 2v42M3 7h40M3 39h40" stroke="#34333a" strokeWidth="1.800" />
            <path d="M8 2l-4 12h6l-5 12 14-16h-6l5-8z" fill="#fbc23a" stroke="#b26a14" strokeWidth="1.400" />
          </S>
          <span>Asociativo</span>
        </BigButton>
        <BigButton $w="82px">
          <S w={46} h={46}><g transform="translate(3 3)"><Tripod size={40} dash="6 2" fill="#d9d9de" /></g></S>
          <span>Anotativo</span>
        </BigButton>
        <BigButton $w="124px">
          <S w={46} h={46}>
            <Hatch x={12} y={10} w={28} h={30} />
            <path d="M5 4h32M5 4v34M5 4l26 26" stroke="#44434a" strokeWidth="1.500" />
            <path d="M36 1l5 3-5 3zM2 36l3 6 3-6z" fill="#333" />
            <rect x="3" y="2" width="5" height="5" fill="#fff" stroke="#2b75ae" strokeWidth="1.500" />
            <path d="M28 32l12-13 3 2-10 14z" fill="#e9a55e" stroke="#6b3a17" />
            <path d="M19 43c3-3 3-9 9-11l5 4c-2 6-8 8-14 7z" fill="#7a3d1c" stroke="#4a230e" />
          </S>
          <WithArrow><span>Igualar<br />propiedades</span><Arrow size={6} /></WithArrow>
        </BigButton>
      </Panel>

      <Panel w="168px" title="Cerrar" pad="6px 0 0">
        <BigButton $w="168px">
          <S w={46} h={46}><path d="M7 10h9l7 9 7-9h9L28 23l11 13h-9l-7-9-7 9H7l11-13z" fill="#bdbdc2" stroke="#4b4a50" strokeWidth="2" /></S>
          <span>Cerrar<br />Editor de sombreado</span>
        </BigButton>
      </Panel>
      <RibbonFill />
    </Ribbon>
  )
}

function DrawingArea() {
  return (
    <Workspace>
      <Viewport>
        <Sheet />
        <ViewLabel>[−][Superior][Estructura alámbrica 2D]</ViewLabel>
        <DocControls>
          <ToolButton aria-label="Minimizar dibujo"><S w={16} h={14}><rect y="8" width="15" height="4" fill="#fff" /></S></ToolButton>
          <ToolButton aria-label="Restaurar dibujo"><S w={14} h={14}><path d="M4 1h9v9" stroke="#fff" strokeWidth="1.600" /><rect x="2" y="5" width="7" height="7" stroke="#fff" strokeWidth="3" /></S></ToolButton>
          <ToolButton aria-label="Cerrar dibujo"><S w={14} h={14}><path d="M2 2l10 10M12 2L2 12" stroke="#fff" strokeWidth="2.600" /></S></ToolButton>
        </DocControls>
        <ViewCube>
          <svg width="152" height="160" viewBox="0 -6 152 160" fontFamily="Open Sans, sans-serif" textAnchor="middle" role="img" aria-label="ViewCube">
            <circle cx="76" cy="76" r="61" fill="none" stroke="#3e404f" strokeWidth="15" />
            <rect x="47" y="46" width="58" height="58" fill="#a9adb3" stroke="#c6c9cc" />
            <rect x="57" y="57" width="37" height="37" fill="#a0a6b0" />
            <text x="76" y="80" fontSize="11" fontWeight="600" fill="#30343e">SUPERIOR</text>
            <g fontSize="22" fontWeight="700" fill="#b4b6be">
              <text x="76" y="20">N</text>
              <text x="76" y="148">S</text>
              <text x="12" y="84">O</text>
              <text x="139" y="84">E</text>
            </g>
          </svg>
          <CoordButton>SCU<S w={12} h={8}><path d="M1 1h10L6 6z" stroke="#a9abb8" /></S></CoordButton>
        </ViewCube>
        <NavBar>
          <S w={46} h={299}>
            <g stroke="#373a47" strokeWidth="1.600">
              <circle cx="37" cy="8" r="5" /><path d="M35 6l4 4M39 6l-4 4" />
              <path d="M8 43c0-10 6-15 15-15h15v15c0 8-6 15-15 15S8 51 8 43z" /><circle cx="23" cy="43" r="8" /><path d="M17 49l-6 5M29 49l6 5" />
              <path d="M18 119c-3-6-8-9-11-15 3-1 6 1 9 5l-3-15c2-2 4 0 4 2l3 9-1-17c2-2 4-1 4 1l2 15 2-16c2-1 4 0 4 2l-1 16 4-11c2-1 4 0 3 2-2 9-2 15-7 22z" />
              <path d="M7 148l20-20M7 128l18 18M7 134v-6h6M21 128h6v6M7 142v6h6" /><circle cx="29" cy="147" r="6" /><path d="M33 152l6 6" strokeWidth="4" />
              <path d="M20 211v-24h-3l6-7 6 7h-3v24z" /><path d="M15 203c-14-2-8-9 8-9 19 0 20 9 0 9h-8l5-4M15 203l5 4" />
              <rect x="7" y="239" width="8" height="9" rx="1" /><rect x="18" y="239" width="8" height="9" rx="1" /><rect x="30" y="239" width="8" height="9" rx="1" />
              <rect x="7" y="252" width="22" height="19" /><path d="M14 257v9l8-4z" fill="#373a47" />
              <circle cx="37" cy="290" r="5" /><path d="M34 290h6" />
            </g>
            <path d="M20 70h7l-3 4zM20 168h7l-3 4zM20 222h7l-3 4z" fill="#2c2f3b" />
          </S>
        </NavBar>
        <Watermark>
          <svg width="118" height="118" viewBox="0 0 118 118" role="img" aria-label="Sp">
            <rect x="2" y="2" width="114" height="114" rx="3" fill="#6c7080" stroke="#31375a" strokeWidth="3" />
            <rect x="5" y="5" width="108" height="108" rx="2" fill="none" stroke="#868a9a" />
            <g fontFamily="Liberation Serif, serif" fontWeight="700" fontSize="80" textAnchor="middle" strokeLinejoin="round">
              <text x="62" y="83" fill="#31375a" stroke="#31375a" strokeWidth="9">Sp</text>
              <text x="62" y="83" fill="#31375a" stroke="#8b8fa0" strokeWidth="6">Sp</text>
              <text x="62" y="83" fill="#2c3158" stroke="#2c3158" strokeWidth="3">Sp</text>
            </g>
          </svg>
        </Watermark>
        <CommandLine>
          <History>
            <HistoryLine $old>Analizando islas internas...</HistoryLine>
            <HistoryLine>Designe punto interno o [Seleccionar objetos/Parámetros]:</HistoryLine>
            <HistoryLine>Comando: Designe esquina opuesta:</HistoryLine>
          </History>
          <Prompt>
            <PromptHandle>
              <S w={8} h={26}><path d="M2 1v24M6 1v24" stroke="#a6a6aa" strokeWidth="2" strokeDasharray="2 2" /></S>
              <ToolButton aria-label="Cerrar línea de comandos"><S w={14} h={14}><path d="M2 2l10 10M12 2L2 12" stroke="#d4d4d8" strokeWidth="2.600" /></S></ToolButton>
              <ToolButton aria-label="Personalizar"><S w={20} h={20}><path d="M8 8l9 9" stroke="#c3c3c8" strokeWidth="4" strokeLinecap="round" /><path d="M5 1l4 4-1 4-4 1-3-4c-1 6 3 8 7 6l4-4c1-4-2-8-7-7z" fill="#c3c3c8" /></S></ToolButton>
            </PromptHandle>
            <S w={22} h={20}><rect x="1" y="1" width="20" height="18" rx="2" fill="#a2aab8" stroke="#656c7a" strokeWidth="1.500" /><path d="M5 5l5 5-5 5M12 14h6" stroke="#2f3440" strokeWidth="2" /></S>
            <S w={14} h={10}><path d="M4 2h8l-4 5z" fill="#4c4d52" /></S>
            <input aria-label="Comando" placeholder="Escriba un comando" />
            <Arrow dir="up" />
          </Prompt>
        </CommandLine>
      </Viewport>
      <VScroll>
        <ScrollButton aria-label="Arriba"><Arrow dir="up" size={8} /></ScrollButton>
        <ScrollGap $n={428} />
        <ScrollButton aria-label="Desplazamiento vertical" />
        <ScrollGap $n={313} />
        <ScrollButton aria-label="Abajo"><Arrow size={8} /></ScrollButton>
      </VScroll>
    </Workspace>
  )
}

function Bottom() {
  return (
    <>
      <LayoutBar>
        <NavButton aria-label="Primera"><S w={12} h={12}><path d="M1 1v10" stroke="#444" strokeWidth="1.500" /><path d="M10 0v12L4 6z" fill="#444" /></S></NavButton>
        <NavButton aria-label="Anterior"><Arrow dir="left" color="#444" /></NavButton>
        <NavButton aria-label="Siguiente"><Arrow dir="right" color="#444" /></NavButton>
        <NavButton aria-label="Última"><S w={12} h={12}><path d="M11 1v10" stroke="#444" strokeWidth="1.500" /><path d="M2 0v12l6-6z" fill="#444" /></S></NavButton>
        <LayoutTab $on $w="84px">Modelo</LayoutTab>
        <LayoutTab $w="109px">Presentación1</LayoutTab>
        <S w={10} h={23}><path d="M9 0L1 23" stroke="#444" strokeWidth="1.400" /></S>
        <LayoutTab $w="109px">Presentación2</LayoutTab>
        <S w={10} h={23}><path d="M9 0L1 23" stroke="#444" strokeWidth="1.400" /></S>
        <HScroll>
          <SplitGrip />
          <Arrow dir="left" />
          <ScrollGap $n={353} />
          <ScrollButton $h="20px" aria-label="Desplazamiento horizontal" />
          <ScrollGap $n={231} />
          <Arrow dir="right" />
        </HScroll>
      </LayoutBar>
      <StatusBar>
        <Coords>1163.8790, 1788.2751, 0.0000</Coords>
        {statusTools.map(([name, on, icon]) => <StatusButton key={name} aria-label={name} $on={on}>{icon}</StatusButton>)}
        <Push />
        <StatusButton $w="74px">MODELO</StatusButton>
        <StatusButton aria-label="Modelo"><S><rect x="3" y="1" width="17" height="16" fill="#f2f2f4" stroke="#444" /><path d="M8 5l8 9H8z" stroke="#333" /><path d="M1 21h21" stroke="#333" strokeWidth="3" /></S></StatusButton>
        <StatusButton aria-label="Presentaciones"><S><rect x="1" y="2" width="10" height="12" fill="#f2f2f4" stroke="#333" strokeWidth="1.500" /><rect x="12" y="2" width="10" height="12" fill="#f2f2f4" stroke="#333" strokeWidth="1.500" /><path d="M1 19h21" stroke="#333" strokeWidth="4" /></S></StatusButton>
        <StatusGap $w="17px" />
        <StatusButton $w="71px"><Tripod size={22} fill="#fff" />1:1<Arrow /></StatusButton>
        <StatusButton aria-label="Visibilidad de anotación"><S><path d="M9 1c3 5 3 8 2 11l8 9c-4-2-6-4-8-4l-2-2-2 2c-2 0-4 2-8 4l8-9c-1-3-1-6 2-11z" fill="#fff" stroke="#333" strokeWidth="1.400" /><circle cx="18" cy="13" r="4" fill="#fbd35a" stroke="#b07f18" /><path d="M16 18h4v4h-4z" fill="#e2b84a" /></S></StatusButton>
        <StatusButton aria-label="Escala automática"><S><path d="M14 1c3 5 3 8 2 11l7 9c-4-2-5-4-7-4l-2-2-2 2c-2 0-3 2-7 4l7-9c-1-3-1-6 2-11zM4 2L2 9h3l-2 6 6-8H6l2-5z" fill="#d2d1d3" stroke="#777679" /></S></StatusButton>
        <StatusGap $w="8px" />
        <StatusButton aria-label="Cambio de espacio"><Gear size={24} fill="#fff" stroke="#333" /></StatusButton>
        <StatusButton aria-label="Bloquear ventanas"><S><path d="M12 11V7c0-6 9-6 9 0v4" stroke="#333" strokeWidth="4" /><path d="M12 11V7c0-6 9-6 9 0v4" stroke="#eee" strokeWidth="1.500" /><rect x="2" y="11" width="14" height="11" fill="#f4f4f6" stroke="#333" strokeWidth="1.500" /><path d="M9 14v5" stroke="#333" strokeWidth="2" /></S></StatusButton>
        <StatusButton aria-label="Aceleración de hardware"><S><rect x="1" y="4" width="17" height="10" fill="#6f7fa8" stroke="#3c4764" /><path d="M3 2v2M7 2v2M11 2v2M15 2v2M3 14v3M7 14v3M11 14v3" stroke="#3c4764" strokeWidth="2" /><circle cx="18" cy="14" r="4" fill="#fbd35a" stroke="#b07f18" /><path d="M16 18h4v4h-4z" fill="#e2b84a" /></S></StatusButton>
        <StatusButton $w="45px" $dark aria-label="Aislar objetos"><S><path d="M12 1c8 0 8 8 4 12l-1 5H9l-1-5C4 9 4 1 12 1z" fill="#fdf0a8" stroke="#7c6a2a" /><path d="M9 18h6v4H9z" fill="#e9e9ea" stroke="#555" /></S></StatusButton>
        <StatusButton $w="15px" aria-label="Menú de barra de estado"><Arrow size={9} color="#0d0d10" /></StatusButton>
        <StatusButton $w="33px" aria-label="Limpiar pantalla"><S><rect x="2" y="2" width="20" height="19" fill="#f1f6fa" stroke="#333" strokeWidth="1.500" /><path d="M2 4h20" stroke="#44546a" strokeWidth="4" /></S></StatusButton>
      </StatusBar>
    </>
  )
}

export default function App() {
  return (
    <Shell>
      <GlobalStyle />
      <Top />
      <HatchRibbon />
      <DrawingArea />
      <Bottom />
    </Shell>
  )
}
